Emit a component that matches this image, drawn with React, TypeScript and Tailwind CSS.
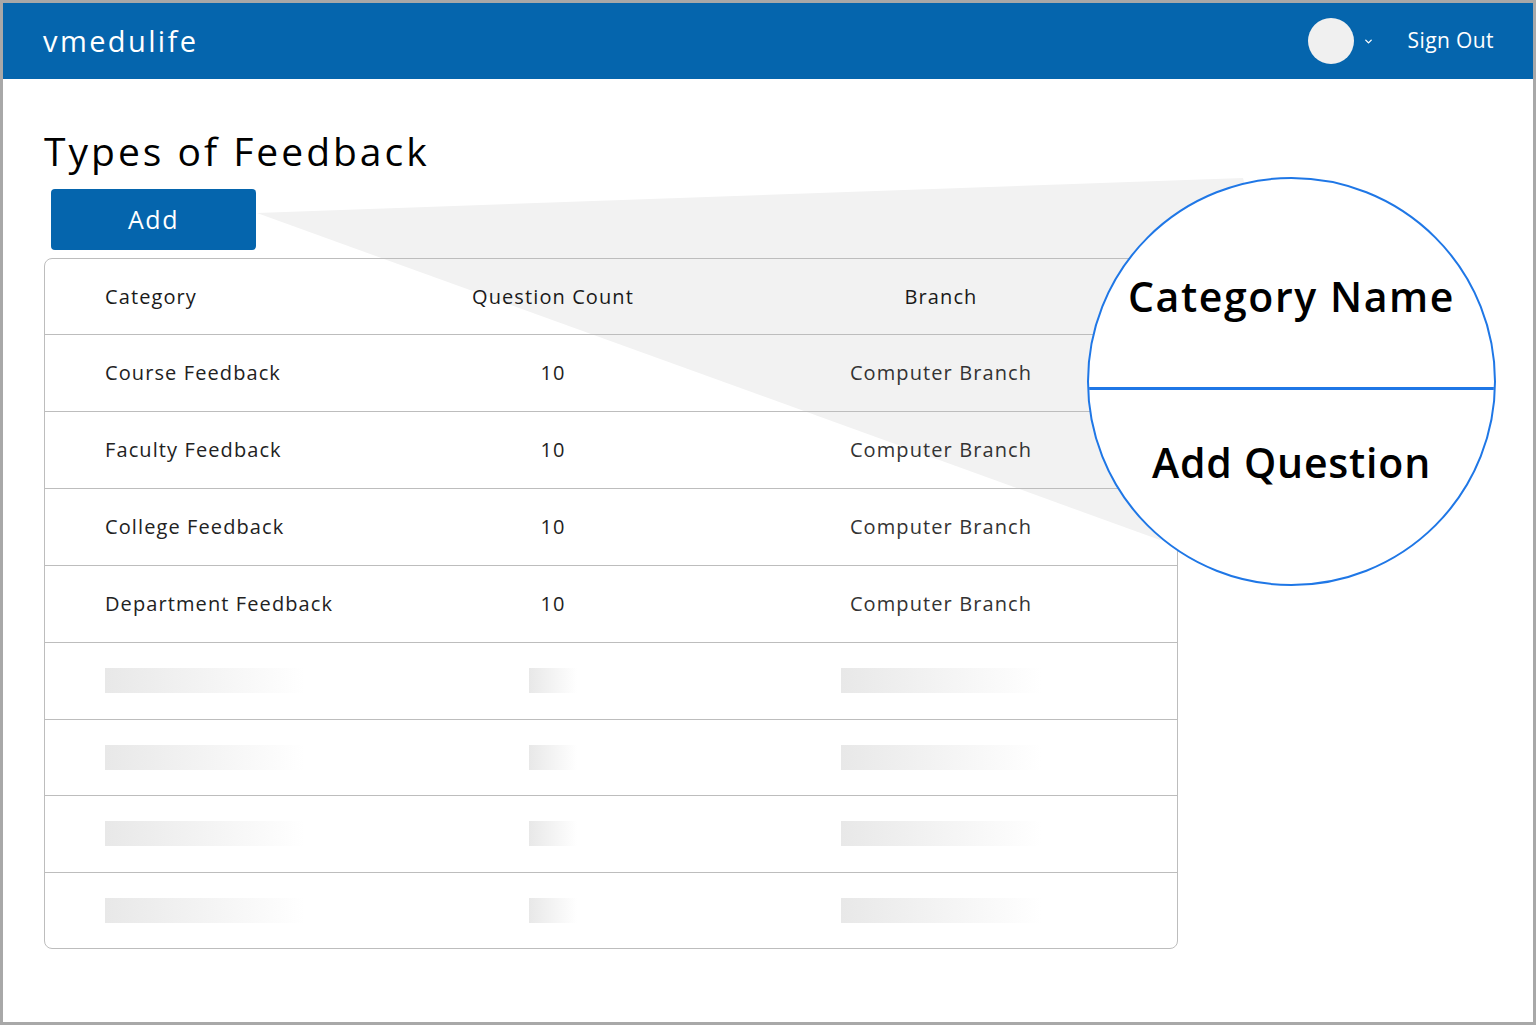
import { ChevronDown } from 'lucide-react';

const rows = [
  { category: 'Course Feedback', count: 10, branch: 'Computer Branch' },
  { category: 'Faculty Feedback', count: 10, branch: 'Computer Branch' },
  { category: 'College Feedback', count: 10, branch: 'Computer Branch' },
  { category: 'Department Feedback', count: 10, branch: 'Computer Branch' },
];

const GRID = 'grid grid-cols-[356px_304px_1fr] items-center';

function SkeletonRow() {
  return (
    <div className={`${GRID} h-[76.6px] border-t border-[#bdbdbd]`}>
      <div className="pl-[60px]">
        <div className="h-[25px] w-[200px] bg-gradient-to-r from-[#e8e8e8] to-white" />
      </div>
      <div className="flex justify-center">
        <div className="h-[25px] w-[48px] bg-gradient-to-r from-[#e8e8e8] to-white" />
      </div>
      <div className="flex justify-center">
        <div className="h-[25px] w-[200px] bg-gradient-to-r from-[#e8e8e8] to-white" />
      </div>
    </div>
  );
}

export default function App() {
  return (
    <div className="relative h-[1025px] w-[1536px] overflow-hidden border-[3px] border-[#a8a8a8] bg-white font-['Open_Sans',sans-serif] text-[#111]">
      {/* spotlight cone from the Add button to the zoom bubble */}
      <svg className="pointer-events-none absolute inset-0 z-0" width="1530" height="1019">
        <polygon points="254,210 1240,175 1288,378 1157,537" fill="#f2f2f2" />
      </svg>

      <header className="relative z-10 flex h-[76px] items-center justify-between bg-[#0565ad] pl-[40px] pr-[39px] text-white">
        <span className="text-[29px] font-medium tracking-[2.4px]">vmedulife</span>
        <div className="flex items-center">
          <div className="h-[46px] w-[46px] rounded-full bg-[#f0f0f0]" />
          <ChevronDown className="ml-[9px] h-[11px] w-[11px]" strokeWidth={3} />
          <span className="ml-[34px] text-[21px] tracking-[0.4px]">Sign Out</span>
        </div>
      </header>

      <main className="relative z-10 pl-[41px] pt-[46px]">
        <h1 className="text-[39px] font-medium leading-[52px] tracking-[3px] text-black">Types of Feedback</h1>
        <button className="ml-[7px] mt-[12px] flex h-[61px] w-[205px] items-center justify-center rounded-[4px] bg-[#0565ad] text-[25px] font-medium tracking-[1.5px] text-white">
          Add
        </button>

        <div className="mt-[8px] w-[1134px] rounded-[8px] border border-[#bdbdbd] text-[20px] tracking-[1.1px]">
          <div className={`${GRID} h-[75px] text-[#1a1a1a]`}>
            <span className="pl-[60px]">Category</span>
            <span className="text-center">Question Count</span>
            <span className="text-center">Branch</span>
          </div>
          {rows.map((r) => (
            <div key={r.category} className={`${GRID} h-[77px] border-t border-[#bdbdbd] text-[#222]`}>
              <span className="pl-[60px]">{r.category}</span>
              <span className="text-center">{r.count}</span>
              <span className="text-center text-[#333]">{r.branch}</span>
            </div>
          ))}
          <SkeletonRow />
          <SkeletonRow />
          <SkeletonRow />
          <SkeletonRow />
        </div>
      </main>

      {/* zoom bubble */}
      <div className="absolute left-[1084px] top-[174px] z-20 flex h-[409px] w-[409px] flex-col overflow-hidden rounded-full border-[2.5px] border-[#1f77e6] bg-white">
        <div className="flex h-[208px] items-end justify-center pb-[60px] text-[41px] font-semibold tracking-[1.6px] text-black">
          Category Name
        </div>
        <div className="h-[2.5px] w-full bg-[#1f77e6]" />
        <div className="flex flex-1 items-start justify-center pt-[42px] text-[41px] font-semibold tracking-[0.8px] text-black">
          Add Question
        </div>
      </div>
    </div>
  );
}
